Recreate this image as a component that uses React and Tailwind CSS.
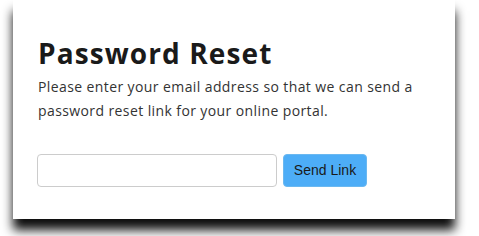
export default function App() {
  return (
    <div className="w-[479px] h-[236px] bg-white overflow-hidden">
      <div
        className="ml-[13px] w-[442px] h-[219px] bg-white shadow-[0_11px_10px_rgba(0,0,0,0.95)] pl-[25px] pt-[33px]"
        style={{ fontFamily: '"Open Sans", sans-serif' }}
      >
        <h1 className="text-[28px] leading-[40px] font-bold text-[#1a1a1a] tracking-[1.1px]">Password Reset</h1>
        <p className="mt-[2px] text-[14px] leading-[24px] text-[#333333] tracking-[0.4px]">
          Please enter your email address so that we can send a password reset link for your online portal.
        </p>
        <div className="mt-[31px] flex items-center gap-[6px] -ml-px">
          <input
            type="text"
            className="w-[240px] h-[33px] border border-[#cccccc] rounded-[4px] bg-white outline-none px-2"
          />
          <button
            className="w-[84px] h-[33px] rounded-[4px] bg-[#4dadf7] border border-[#6bb8f0] text-[#1a1a1a] text-[14px]"
            style={{ fontFamily: '"Liberation Sans", Arial, sans-serif' }}
          >
            Send Link
          </button>
        </div>
      </div>
    </div>
  );
}
